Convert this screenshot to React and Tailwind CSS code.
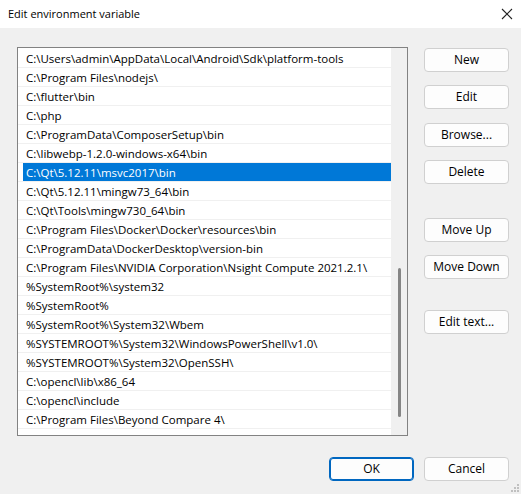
import React from "react";

const paths = [
  "C:\\Users\\admin\\AppData\\Local\\Android\\Sdk\\platform-tools",
  "C:\\Program Files\\nodejs\\",
  "C:\\flutter\\bin",
  "C:\\php",
  "C:\\ProgramData\\ComposerSetup\\bin",
  "C:\\libwebp-1.2.0-windows-x64\\bin",
  "C:\\Qt\\5.12.11\\msvc2017\\bin",
  "C:\\Qt\\5.12.11\\mingw73_64\\bin",
  "C:\\Qt\\Tools\\mingw730_64\\bin",
  "C:\\Program Files\\Docker\\Docker\\resources\\bin",
  "C:\\ProgramData\\DockerDesktop\\version-bin",
  "C:\\Program Files\\NVIDIA Corporation\\Nsight Compute 2021.2.1\\",
  "%SystemRoot%\\system32",
  "%SystemRoot%",
  "%SystemRoot%\\System32\\Wbem",
  "%SYSTEMROOT%\\System32\\WindowsPowerShell\\v1.0\\",
  "%SYSTEMROOT%\\System32\\OpenSSH\\",
  "C:\\opencl\\lib\\x86_64",
  "C:\\opencl\\include",
  "C:\\Program Files\\Beyond Compare 4\\",
];

const SELECTED = 6;

function Btn({ children, className = "", primary = false }) {
  return (
    <button
      className={`h-[24px] w-[85px] rounded-[4px] border bg-[#fdfdfd] text-[12px] text-black ${
        primary ? "border-[#0067c0] shadow-[inset_0_0_0_1px_#0067c0]" : "border-[#d0d0d0]"
      } ${className}`}
    >
      {children}
    </button>
  );
}

export default function App() {
  return (
    <div
      className="relative flex h-[494px] w-[521px] flex-col bg-[#f0f0f0] text-black"
      style={{ fontFamily: '"Open Sans", "Noto Sans", sans-serif' }}
    >
      {/* title bar */}
      <div className="flex h-[28px] items-center justify-between bg-white pl-[8px] pr-[7px]">
        <span className="text-[11px]">Edit environment variable</span>
        <svg width="12" height="12" viewBox="0 0 12 12" className="mr-[1px]">
          <path d="M1 1 L11 11 M11 1 L1 11" stroke="#222" strokeWidth="1.1" />
        </svg>
      </div>

      <div className="flex pl-[17px] pr-[12px] pt-[19px]">
        {/* path list */}
        <div className="flex h-[389px] w-[391px] border border-[#828282] bg-white">
          <div className="flex flex-1 flex-col overflow-hidden pt-[1px]">
            {paths.map((p, i) => (
              <div
                key={p}
                className="flex h-[19px] shrink-0 items-stretch border-b border-[#f0f0f0]"
              >
                <div
                  className={`ml-[5px] flex flex-1 items-center whitespace-nowrap pl-[3px] pt-[1px] text-[11.5px] ${
                    i === SELECTED ? "bg-[#0078d7] text-white" : ""
                  }`}
                >
                  {p}
                </div>
              </div>
            ))}
          </div>
          <div className="flex w-[16px] shrink-0 justify-center bg-[#f0f0f0] pt-[220px]">
            <div className="h-[149px] w-[3px] rounded-full bg-[#858585]" />
          </div>
        </div>

        {/* side buttons */}
        <div className="ml-[16px] flex flex-col pt-[1px]">
          <Btn>New</Btn>
          <Btn className="mt-[13px]">Edit</Btn>
          <Btn className="mt-[14px]">Browse...</Btn>
          <Btn className="mt-[13px]">Delete</Btn>
          <Btn className="mt-[34px]">Move Up</Btn>
          <Btn className="mt-[13px]">Move Down</Btn>
          <Btn className="mt-[31px]">Edit text...</Btn>
        </div>
      </div>

      {/* footer */}
      <div className="flex justify-end gap-[10px] pr-[12px] pt-[21px]">
        <Btn primary>OK</Btn>
        <Btn>Cancel</Btn>
      </div>

      {/* resize grip */}
      <div className="absolute bottom-[2px] right-[2px] grid grid-cols-3 gap-[1px]">
        <span />
        <span />
        <span className="h-[2px] w-[2px] bg-[#c0c0c0]" />
        <span />
        <span className="h-[2px] w-[2px] bg-[#c0c0c0]" />
        <span className="h-[2px] w-[2px] bg-[#c0c0c0]" />
        <span className="h-[2px] w-[2px] bg-[#c0c0c0]" />
        <span className="h-[2px] w-[2px] bg-[#c0c0c0]" />
        <span className="h-[2px] w-[2px] bg-[#c0c0c0]" />
      </div>
    </div>
  );
}
